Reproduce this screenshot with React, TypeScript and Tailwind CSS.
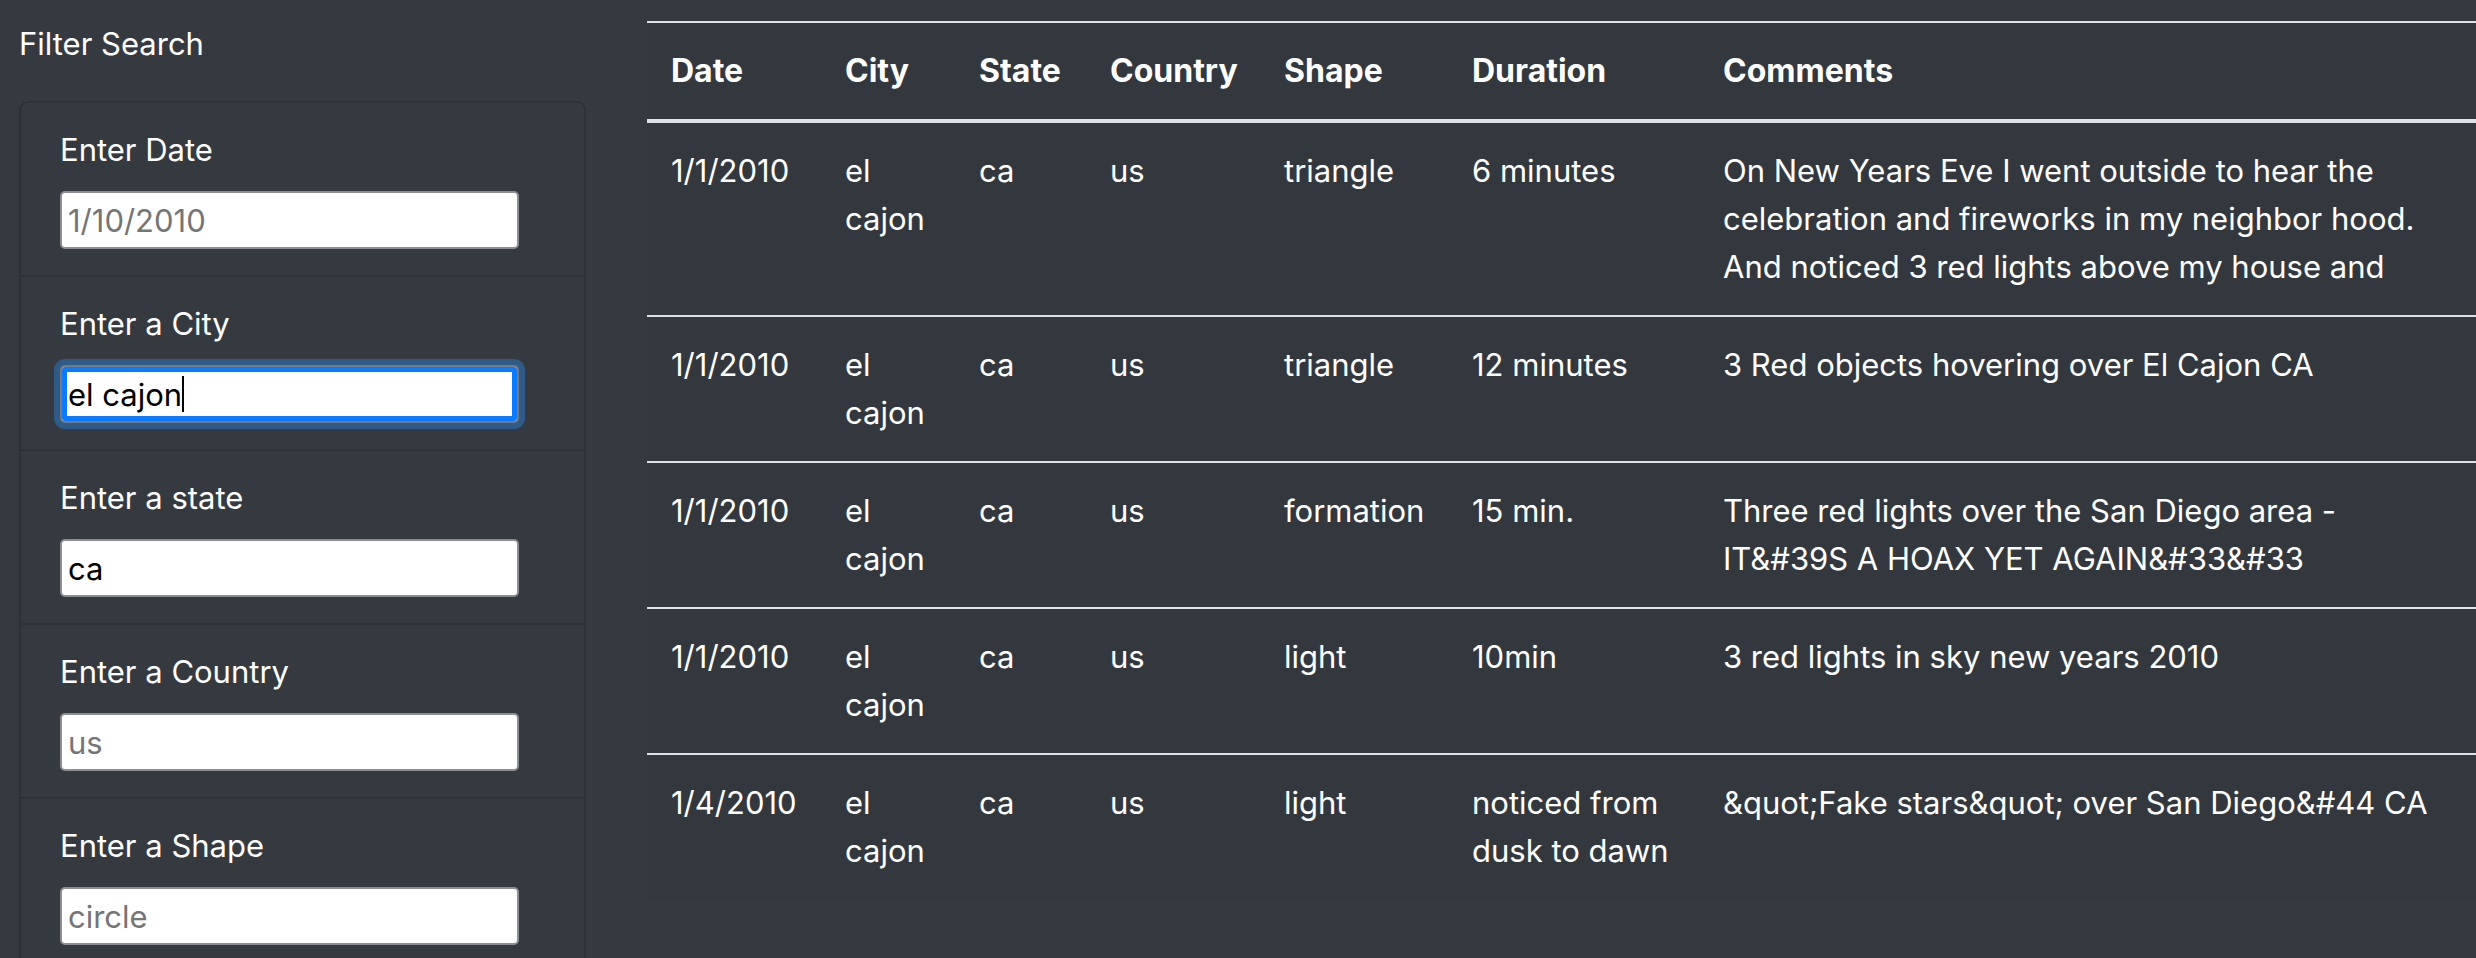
import { useState } from "react";

const filters = [
  { id: "datetime", label: "Enter Date", placeholder: "1/10/2010", value: "" },
  { id: "city", label: "Enter a City", placeholder: "", value: "el cajon", focused: true },
  { id: "state", label: "Enter a state", placeholder: "", value: "ca" },
  { id: "country", label: "Enter a Country", placeholder: "us", value: "" },
  { id: "shape", label: "Enter a Shape", placeholder: "circle", value: "" },
];

const sightings = [
  {
    datetime: "1/1/2010",
    city: "el cajon",
    state: "ca",
    country: "us",
    shape: "triangle",
    duration: "6 minutes",
    comments:
      "On New Years Eve I went outside to hear the\ncelebration and fireworks in my neighbor hood.\nAnd noticed 3 red lights above my house and",
  },
  {
    datetime: "1/1/2010",
    city: "el cajon",
    state: "ca",
    country: "us",
    shape: "triangle",
    duration: "12 minutes",
    comments: "3 Red objects hovering over El Cajon CA",
  },
  {
    datetime: "1/1/2010",
    city: "el cajon",
    state: "ca",
    country: "us",
    shape: "formation",
    duration: "15 min.",
    comments: "Three red lights over the San Diego area -\nIT&#39S A HOAX YET AGAIN&#33&#33",
  },
  {
    datetime: "1/1/2010",
    city: "el cajon",
    state: "ca",
    country: "us",
    shape: "light",
    duration: "10min",
    comments: "3 red lights in sky new years 2010",
  },
  {
    datetime: "1/4/2010",
    city: "el cajon",
    state: "ca",
    country: "us",
    shape: "light",
    duration: "noticed from\ndusk to dawn",
    comments: "&quot;Fake stars&quot; over San Diego&#44 CA",
  },
];

const headers = ["Date", "City", "State", "Country", "Shape", "Duration", "Comments"];
const colWidths = ["w-[174px]", "w-[134px]", "w-[131px]", "w-[174px]", "w-[188px]", "w-[251px]", "w-[777px]"];

const App = () => {
  const [values, setValues] = useState<Record<string, string>>(
    Object.fromEntries(filters.map((f) => [f.id, f.value]))
  );

  return (
    <div className="h-screen overflow-hidden bg-[#353a41] text-white font-['Inter','Noto_Sans',sans-serif]">
      <div className="flex items-start">
        <aside className="w-[567px] shrink-0 ml-[19px] pt-[20px]">
          <h5 className="text-[31px] leading-[48px] mb-[33px]">Filter Search</h5>
          <ul className="border-2 border-[#2d3238] rounded-[9px]">
            {filters.map((f, i) => (
              <li
                key={f.id}
                className={
                  "pl-[39px] pt-[23px] pb-[26px] " +
                  (i < filters.length - 1 ? "border-b-2 border-[#2d3238]" : "")
                }
              >
                <label htmlFor={f.id} className="block text-[31px] leading-[48px] mb-[17px]">
                  {f.label}
                </label>
                <div className="relative w-[459px]">
                  <input
                    id={f.id}
                    type="text"
                    value={values[f.id]}
                    placeholder={f.placeholder}
                    onChange={(e) => setValues({ ...values, [f.id]: e.target.value })}
                    className={
                      "block w-[459px] h-[58px] bg-white text-black text-[31px] px-[6px] rounded-[5px] border-2 outline-none placeholder:text-[#757575] " +
                      (f.focused
                        ? "border-[#76797e] shadow-[inset_0_0_0_5px_#0a7bff,0_0_0_6px_#2e5b88]"
                        : "border-[#8c8e93]")
                    }
                  />
                  {f.focused && (
                    <div className="absolute inset-0 flex items-center px-[8px] text-[31px] pointer-events-none">
                      <span className="invisible">{values[f.id]}</span>
                      <span className="inline-block w-[2px] h-[36px] bg-black" />
                    </div>
                  )}
                </div>
              </li>
            ))}
          </ul>
        </aside>

        <main className="ml-[61px] mt-[21px] w-[1829px] shrink-0">
          <table className="w-[1829px] table-fixed border-collapse bg-[#33383f] leading-[48px]">
            <colgroup>
              {colWidths.map((w, i) => (
                <col key={i} className={w} />
              ))}
            </colgroup>
            <thead>
              <tr>
                {headers.map((h) => (
                  <th
                    key={h}
                    className="text-left text-[32px] font-bold px-[24px] py-[24px] border-t-2 border-b-4 border-[#dee2e6]"
                  >
                    {h}
                  </th>
                ))}
              </tr>
            </thead>
            <tbody>
              {sightings.map((s, i) => (
                <tr key={i}>
                  {[s.datetime, s.city, s.state, s.country, s.shape, s.duration, s.comments].map((v, j) => (
                    <td
                      key={j}
                      className="align-top whitespace-pre-line text-[31px] px-[24px] py-[24px] border-t-2 border-[#dee2e6]"
                    >
                      {v}
                    </td>
                  ))}
                </tr>
              ))}
            </tbody>
          </table>
        </main>
      </div>
    </div>
  );
};

export default App;
